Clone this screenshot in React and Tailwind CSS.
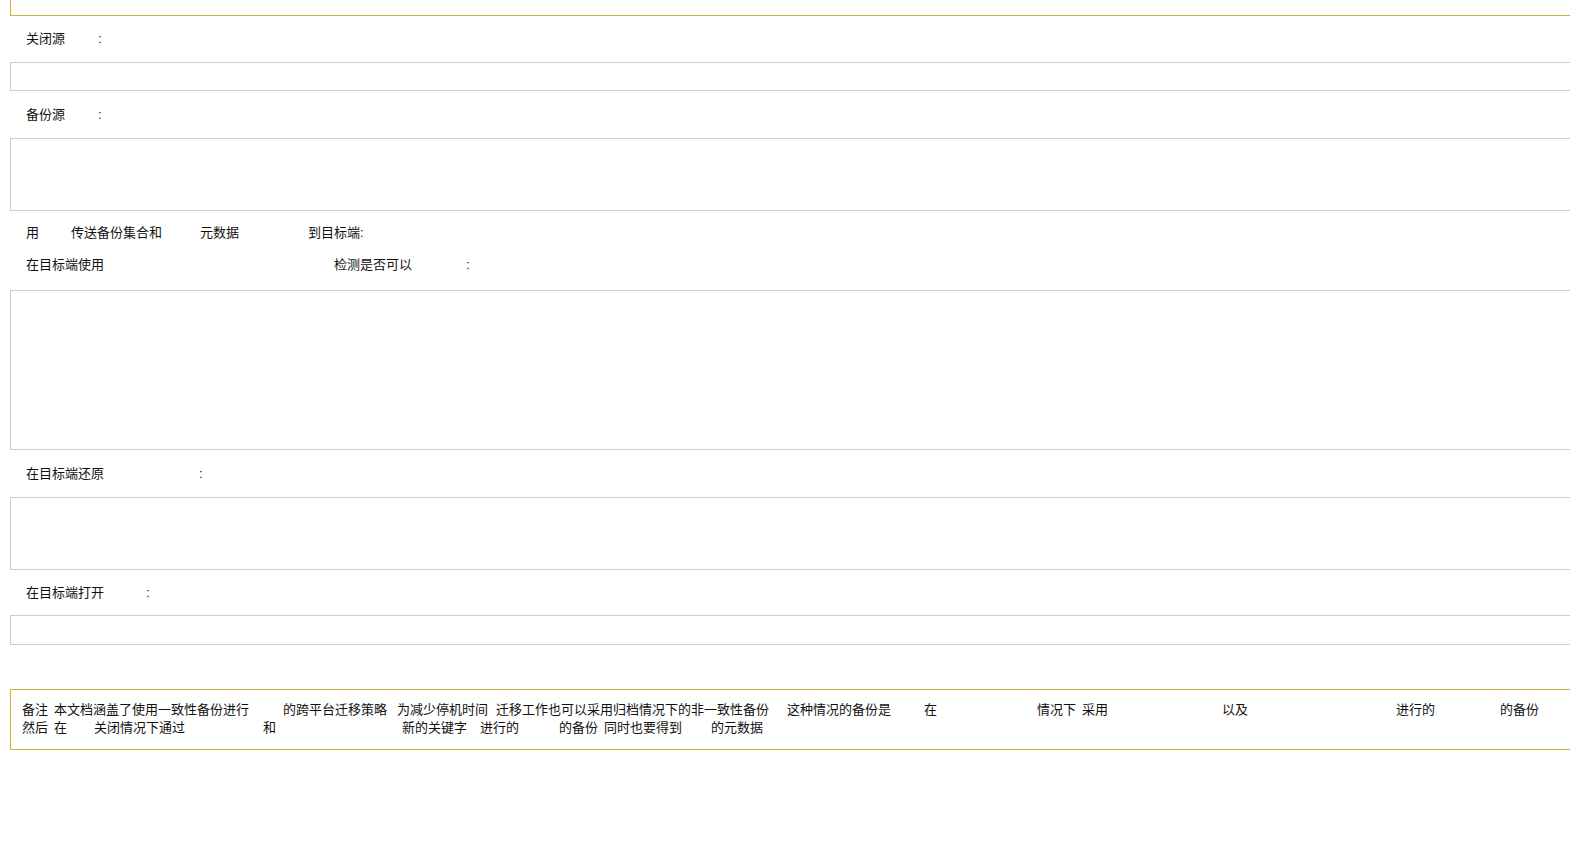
export default function App() {
  const f = { fontFamily: '"Liberation Sans", "Noto Sans CJK SC", sans-serif' };
  const Box = ({ h }) => <div className={`ml-[10px] w-[1580px] border border-[#c9cde0] ${h}`} />;
  return (
    <div className="w-[1570px] h-[857px] overflow-hidden bg-white text-[13px] text-[#111]" style={f}>
      <div className="ml-[10px] w-[1580px] h-[16px] border border-t-0 border-[#c8b440]" />
      <div className="h-[46px] flex items-center pl-[26px]"><span className="w-[72px]">关闭源</span><span>:</span></div>
      <Box h="h-[29px]" />
      <div className="h-[47px] flex items-center pl-[26px]"><span className="w-[72px]">备份源</span><span>:</span></div>
      <Box h="h-[73px]" />
      <div className="pt-[12px] pl-[26px] leading-[20px]">
        <div className="flex"><span className="w-[45px]">用</span><span className="w-[129px]">传送备份集合和</span><span className="w-[108px]">元数据</span><span>到目标端:</span></div>
        <div className="flex mt-[12px] mb-[15px]"><span className="w-[308px]">在目标端使用</span><span className="w-[132px]">检测是否可以</span><span>:</span></div>
      </div>
      <Box h="h-[160px]" />
      <div className="h-[47px] flex items-center pl-[26px]"><span className="w-[173px]">在目标端还原</span><span>:</span></div>
      <Box h="h-[73px]" />
      <div className="h-[45px] flex items-center pl-[26px]"><span className="w-[120px]">在目标端打开</span><span>:</span></div>
      <Box h="h-[30px]" />
      <div className="mt-[44px] ml-[10px] w-[1580px] h-[61px] border border-[#c8b440] pl-[11px] pt-[11px] leading-[18px] whitespace-nowrap">
        <div className="flex">
          <span className="w-[32px]">备注</span><span className="w-[229px]">本文档涵盖了使用一致性备份进行</span><span className="w-[114px]">的跨平台迁移策略</span><span className="w-[99px]">为减少停机时间</span><span className="w-[291px]">迁移工作也可以采用归档情况下的非一致性备份</span><span className="w-[137px]">这种情况的备份是</span><span className="w-[113px]">在</span><span className="w-[45px]">情况下</span><span className="w-[140px]">采用</span><span className="w-[174px]">以及</span><span className="w-[104px]">进行的</span><span>的备份</span>
        </div>
        <div className="flex">
          <span className="w-[32px]">然后</span><span className="w-[40px]">在</span><span className="w-[169px]">关闭情况下通过</span><span className="w-[139px]">和</span><span className="w-[78px]">新的关键字</span><span className="w-[79px]">进行的</span><span className="w-[45px]">的备份</span><span className="w-[107px]">同时也要得到</span><span>的元数据</span>
        </div>
      </div>
    </div>
  );
}
